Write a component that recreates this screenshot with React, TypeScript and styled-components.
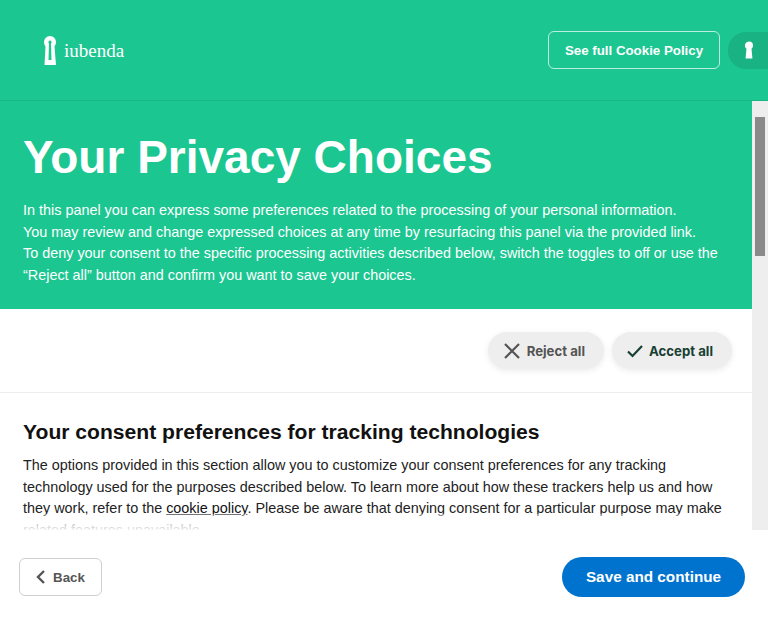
import React from 'react';
import styled, { createGlobalStyle } from 'styled-components';

const GlobalStyle = createGlobalStyle`
  html, body {
    margin: 0;
    height: 100%;
    overflow: hidden;
    background: #fff;
    font-family: "Liberation Sans", Arial, sans-serif;
  }
  #root { height: 100%; }
`;

const KeyholeLogo = () => (
  <LogoMark viewBox="0 0 12 29" aria-hidden="true">
    <path
      fillRule="evenodd"
      fill="#fff"
      d="M6 0a6 6 0 0 1 6 6c0 1.900-.7 3.200-1.500 4.300L12 29H0.500L1.500 10.300C.7 9.200 0 7.900 0 6a6 6 0 0 1 6-6zm0 4.500a1.700 1.700 0 0 0-1 3L4.500 24h3L7 7.500a1.700 1.700 0 0 0-1-3z"
    />
  </LogoMark>
);

const App = () => (
  <Page>
    <GlobalStyle />
    <Header>
      <Brand>
        <KeyholeLogo />
        <BrandName>iubenda</BrandName>
      </Brand>
      <HeaderActions>
        <PolicyLink>See full Cookie Policy</PolicyLink>
        <BadgeTab>
          <BadgeKey viewBox="0 0 14 30" aria-hidden="true">
            <path fill="#fff" d="M7 0a7 7 0 0 1 7 7c0 2.600-1.200 4.400-2.600 5.600L13 30H1l1.600-17.400A7 7 0 0 1 7 0z" />
          </BadgeKey>
        </BadgeTab>
      </HeaderActions>
    </Header>
    <ScrollFrame>
      <ScrollContent>
        <Hero>
          <HeroTitle>Your Privacy Choices</HeroTitle>
          <HeroText>
            In this panel you can express some preferences related to the processing of your personal information.
            <br />
            You may review and change expressed choices at any time by resurfacing this panel via the provided link.
            <br />
            To deny your consent to the specific processing activities described below, switch the toggles to off or use the “Reject all” button and confirm you want to save your choices.
          </HeroText>
        </Hero>
        <BulkBar>
          <PillButton $color="#545454">
            <svg width="18" height="18" viewBox="0 0 18 18" fill="none" stroke="currentColor" strokeWidth="2.200" aria-hidden="true">
              <path d="M2 2l14 14M16 2L2 16" />
            </svg>
            Reject all
          </PillButton>
          <PillButton $color="#183f33">
            <svg width="16" height="14" viewBox="0 0 16 14" fill="none" stroke="currentColor" strokeWidth="2.200" aria-hidden="true">
              <path d="M1 7.500l4.500 4.500L15 2" />
            </svg>
            Accept all
          </PillButton>
        </BulkBar>
        <Section>
          <SectionTitle>Your consent preferences for tracking technologies</SectionTitle>
          <SectionText>
            The options provided in this section allow you to customize your consent preferences for any tracking technology used for the purposes described below. To learn more about how these trackers help us and how they work, refer to the <a href="#policy">cookie policy</a>. Please be aware that denying consent for a particular purpose may make related features unavailable.
          </SectionText>
        </Section>
        <BottomFade />
      </ScrollContent>
      <ScrollTrack>
        <ScrollThumb />
      </ScrollTrack>
    </ScrollFrame>
    <Footer>
      <BackButton>
        <svg width="10" height="14" viewBox="0 0 10 14" fill="none" stroke="currentColor" strokeWidth="2.400" aria-hidden="true">
          <path d="M8 1L2 7l6 6" />
        </svg>
        Back
      </BackButton>
      <SaveButton>Save and continue</SaveButton>
    </Footer>
  </Page>
);

export default App;

const Page = styled.div`
  height: 624px;
  display: flex;
  flex-direction: column;
  overflow: hidden;
`;

const Header = styled.header`
  flex: 0 0 101px;
  box-sizing: border-box;
  padding: 0 0 0 44px;
  display: flex;
  align-items: center;
  justify-content: space-between;
  background: #1cc691;
  border-bottom: 1px solid #1ab685;
`;

const Brand = styled.div`
  display: flex;
  align-items: center;
  gap: 8px;
`;

const LogoMark = styled.svg`
  width: 12px;
  height: 29px;
`;

const BrandName = styled.span`
  font-family: "Liberation Serif", serif;
  font-size: 19px;
  color: #fff;
  padding-top: 2px;
`;

const HeaderActions = styled.div`
  display: flex;
  align-items: center;
  gap: 8px;
`;

const PolicyLink = styled.a`
  box-sizing: border-box;
  width: 172px;
  height: 38px;
  display: flex;
  align-items: center;
  justify-content: center;
  border: 1px solid rgba(255, 255, 255, 0.7);
  border-radius: 6px;
  color: #fff;
  font-size: 13.300px;
  font-weight: 700;
`;

const BadgeTab = styled.div`
  width: 40px;
  height: 37px;
  display: flex;
  align-items: center;
  padding-left: 17px;
  box-sizing: border-box;
  background: #19b282;
  border-radius: 18px 0 0 18px;
`;

const BadgeKey = styled.svg`
  width: 8px;
  height: 18px;
`;

const ScrollFrame = styled.div`
  flex: 1;
  min-height: 0;
  display: flex;
  overflow: hidden;
`;

const ScrollContent = styled.main`
  flex: 1;
  min-width: 0;
  overflow: hidden;
  position: relative;
`;

const ScrollTrack = styled.div`
  flex: 0 0 16px;
  box-sizing: border-box;
  padding: 16px 3px 0;
  background: #eeeeee;
`;

const ScrollThumb = styled.div`
  height: 139px;
  background: #8a8a8a;
`;

const BottomFade = styled.div`
  position: absolute;
  left: 0;
  right: 0;
  bottom: 0;
  height: 16px;
  background: linear-gradient(rgba(255, 255, 255, 0.4), rgba(255, 255, 255, 0.92));
`;

const Hero = styled.section`
  background: #1cc691;
  padding: 29px 23px 23px;
  color: #fff;
`;

const HeroTitle = styled.h1`
  margin: 0 0 16px;
  font-size: 46px;
  line-height: 54px;
  font-weight: 700;
`;

const HeroText = styled.p`
  margin: 0;
  font-size: 14.400px;
  line-height: 21.500px;
`;

const BulkBar = styled.div`
  display: flex;
  justify-content: flex-end;
  gap: 8px;
  padding: 23px 20px;
  border-bottom: 1px solid #ededed;
`;

const PillButton = styled.button<{ $color: string }>`
  height: 37px;
  padding: 0 19px 0 15px;
  display: flex;
  align-items: center;
  gap: 6px;
  border: 0;
  border-radius: 19px;
  background: #eeeeee;
  box-shadow: 0 2px 6px rgba(0, 0, 0, 0.08);
  color: ${p => p.$color};
  font: 700 13.200px "Inter", "Liberation Sans", sans-serif;
`;

const Section = styled.section`
  padding: 26px 23px 0;
`;

const SectionTitle = styled.h2`
  margin: 0 0 10px;
  font-size: 21.100px;
  line-height: 26px;
  font-weight: 700;
  color: #111;
`;

const SectionText = styled.p`
  margin: 0;
  font-size: 14.400px;
  line-height: 21.500px;
  color: #222;

  a { color: #111; }
`;

const Footer = styled.footer`
  flex: 0 0 94px;
  padding: 0 23px 0 19px;
  display: flex;
  align-items: center;
  justify-content: space-between;
  background: #fff;
`;

const BackButton = styled.button`
  box-sizing: border-box;
  width: 83px;
  height: 38px;
  display: flex;
  align-items: center;
  justify-content: center;
  gap: 7px;
  background: #fff;
  border: 1px solid #cfcfcf;
  border-radius: 6px;
  color: #555;
  font: 700 13.300px "Liberation Sans", sans-serif;
`;

const SaveButton = styled.button`
  width: 183px;
  height: 40px;
  border: 0;
  border-radius: 20px;
  background: #0073ce;
  color: #fff;
  font: 700 15.300px "Liberation Sans", sans-serif;
`;
